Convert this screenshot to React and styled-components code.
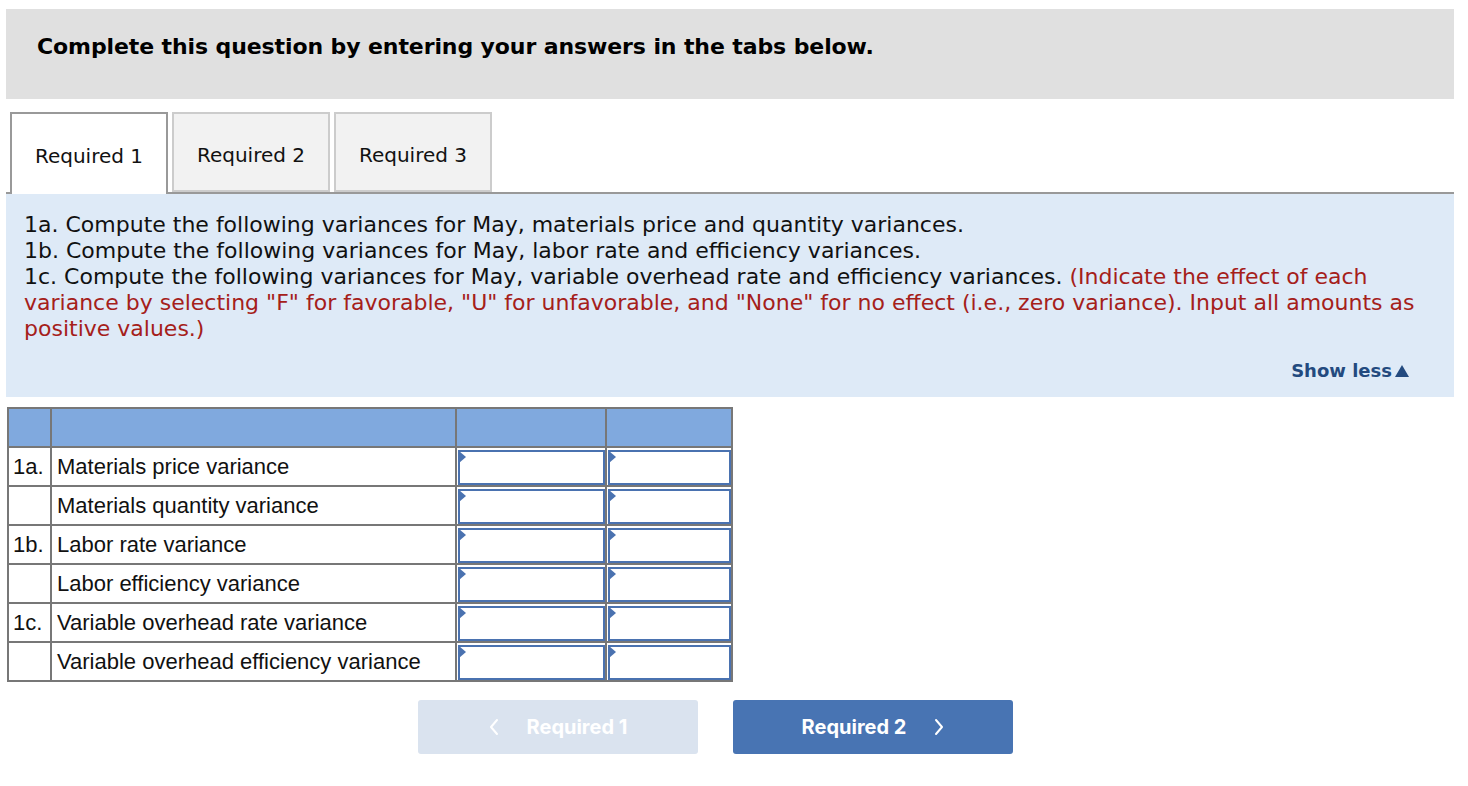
import React from 'react';
import styled, { createGlobalStyle } from 'styled-components';

const GlobalStyle = createGlobalStyle`
  html, body { margin: 0; padding: 0; background: #fff; }
  body { font-family: "DejaVu Sans", Verdana, sans-serif; }
`;

const Page = styled.div`
  padding: 9px 14px 0 6px;
`;

const Header = styled.div`
  background: #e0e0e0;
  height: 90px;
  box-sizing: border-box;
  padding: 24px 0 0 31px;
  h1 {
    margin: 0;
    font-size: 22px;
    line-height: 28px;
    font-weight: bold;
    color: #000;
    letter-spacing: -0.1px;
  }
`;

const TabRow = styled.div`
  display: flex;
  margin-top: 13px;
  padding-left: 4px;
  gap: 4px;
  border-bottom: 2px solid #999;
  height: 80px;
`;

const Tab = styled.div`
  width: 158px;
  box-sizing: border-box;
  height: ${p => (p.$active ? '82px' : '80px')};
  display: flex;
  align-items: center;
  justify-content: center;
  font-size: 20px;
  color: #111;
  background: ${p => (p.$active ? '#fff' : '#f2f2f2')};
  border: 2px solid ${p => (p.$active ? '#999' : '#ccc')};
  border-bottom: ${p => (p.$active ? 'none' : '2px solid #ccc')};
  position: relative;
  z-index: ${p => (p.$active ? 1 : 0)};
  padding-top: ${p => (p.$active ? '4px' : '5px')};
`;

const Panel = styled.div`
  background: #deeaf7;
  padding: 18px 24px 15px 18px;
  font-size: 22px;
  line-height: 26px;
  color: #111;
`;

const Instructions = styled.p`
  margin: 0;
  span { color: #a5201a; }
`;

const ShowLess = styled.div`
  display: flex;
  justify-content: flex-end;
  padding-right: 20px;
  margin-top: 18px;
  color: #234a7f;
  font-weight: bold;
  font-size: 18px;
  line-height: 22px;
  gap: 2px;
  align-items: center;
`;

const Table = styled.table`
  border-collapse: collapse;
  margin-top: 10px;
  margin-left: 1px;
  font-family: "Liberation Sans", Arial, sans-serif;
  font-size: 22px;
  color: #111;
  td, th {
    border: 2px solid #777;
    padding: 0;
  }
`;

const HeadCell = styled.th`
  background: #80a9de;
  height: 37px;
  width: ${p => p.$w}px;
`;

const Row = styled.tr`
  height: 39px;
`;

const LabelCell = styled.td`
  padding: 0 5px !important;
  white-space: nowrap;
`;

const NumCell = styled.td`
  padding: 0 4px !important;
  text-align: left;
`;

const InputCell = styled.td`
  background: #fff;
  position: relative;
`;

const InputBox = styled.div`
  margin: 1px 0 0 1px;
  height: 35px;
  border: 2px solid #4a72b0;
  box-sizing: border-box;
  position: relative;
  &::before {
    content: '';
    position: absolute;
    left: -1px;
    top: -1px;
    border-left: 7px solid #4a72b0;
    border-top: 6px solid transparent;
    border-bottom: 6px solid transparent;
  }
`;

const Nav = styled.div`
  display: flex;
  gap: 35px;
  margin-top: 18px;
  padding-left: 412px;
`;

const NavButton = styled.button`
  width: 280px;
  height: 54px;
  border: none;
  border-radius: 3px;
  background: ${p => (p.$disabled ? '#dae3ef' : '#4874b3')};
  color: #fff;
  font-family: Inter, Roboto, sans-serif;
  font-weight: bold;
  font-size: 20px;
  display: flex;
  align-items: center;
  justify-content: center;
  gap: 28px;
  svg { display: block; }
`;

const Chevron = ({ dir }) => (
  <svg width="10" height="18" viewBox="0 0 10 18">
    <path
      d={dir === 'left' ? 'M8 2 L2 9 L8 16' : 'M2 2 L8 9 L2 16'}
      stroke="#fff"
      strokeWidth="2"
      fill="none"
      strokeLinecap="round"
      strokeLinejoin="round"
    />
  </svg>
);

const rows = [
  ['1a.', 'Materials price variance'],
  ['', 'Materials quantity variance'],
  ['1b.', 'Labor rate variance'],
  ['', 'Labor efficiency variance'],
  ['1c.', 'Variable overhead rate variance'],
  ['', 'Variable overhead efficiency variance'],
];

export default function App() {
  return (
    <Page>
      <GlobalStyle />
      <Header>
        <h1>Complete this question by entering your answers in the tabs below.</h1>
      </Header>
      <TabRow>
        <Tab $active>Required 1</Tab>
        <Tab>Required 2</Tab>
        <Tab>Required 3</Tab>
      </TabRow>
      <Panel>
        <Instructions>
          1a. Compute the following variances for May, materials price and quantity variances.<br />
          1b. Compute the following variances for May, labor rate and efficiency variances.<br />
          1c. Compute the following variances for May, variable overhead rate and efficiency variances.{' '}
          <span>
            (Indicate the effect of each variance by selecting "F" for favorable, "U" for unfavorable, and "None" for no effect (i.e., zero variance). Input all amounts as positive values.)
          </span>
        </Instructions>
        <ShowLess>
          Show less
          <svg width="16" height="14" viewBox="0 0 16 14">
            <path d="M8 1 L15 13 L1 13 Z" fill="#234a7f" />
          </svg>
        </ShowLess>
      </Panel>
      <Table>
        <thead>
          <tr>
            <HeadCell $w={41} />
            <HeadCell $w={403} />
            <HeadCell $w={148} />
            <HeadCell $w={124} />
          </tr>
        </thead>
        <tbody>
          {rows.map(([n, label], i) => (
            <Row key={i}>
              <NumCell>{n}</NumCell>
              <LabelCell>{label}</LabelCell>
              <InputCell><InputBox /></InputCell>
              <InputCell><InputBox /></InputCell>
            </Row>
          ))}
        </tbody>
      </Table>
      <Nav>
        <NavButton $disabled>
          <Chevron dir="left" />
          Required 1
        </NavButton>
        <NavButton>
          Required 2
          <Chevron dir="right" />
        </NavButton>
      </Nav>
    </Page>
  );
}
